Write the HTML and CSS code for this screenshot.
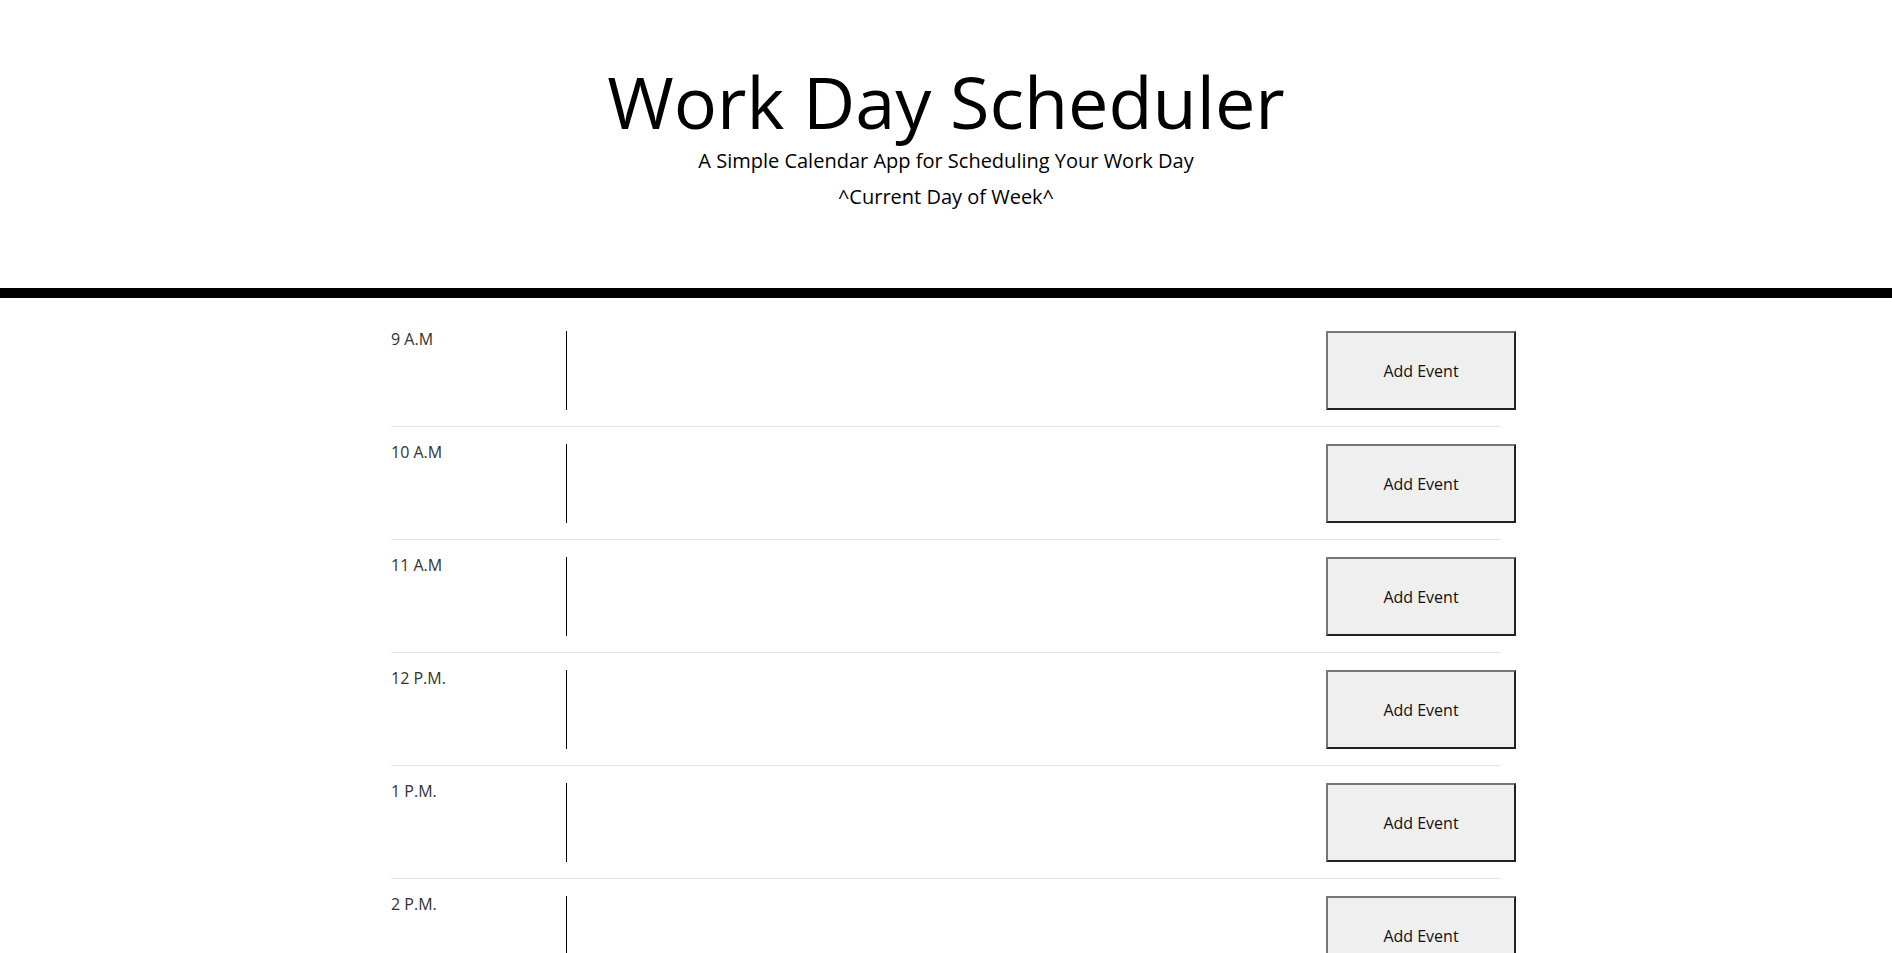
FILE: index.html
```html
<!DOCTYPE html>
<html lang="en">
<head>
<meta charset="utf-8">
<title>Work Day Scheduler</title>
<link rel="stylesheet" href="styles.css">
</head>
<body>
<header class="jumbotron">
  <h1 class="title">Work Day Scheduler</h1>
  <p class="lead">A Simple Calendar App for Scheduling Your Work Day</p>
  <p class="day">^Current Day of Week^</p>
</header>
<main class="container">
  <div class="time-row"><div class="hour">9 A.M</div><textarea class="description"></textarea><button class="save-btn">Add Event</button></div>
  <div class="time-row"><div class="hour">10 A.M</div><textarea class="description"></textarea><button class="save-btn">Add Event</button></div>
  <div class="time-row"><div class="hour">11 A.M</div><textarea class="description"></textarea><button class="save-btn">Add Event</button></div>
  <div class="time-row"><div class="hour">12 P.M.</div><textarea class="description"></textarea><button class="save-btn">Add Event</button></div>
  <div class="time-row"><div class="hour">1 P.M.</div><textarea class="description"></textarea><button class="save-btn">Add Event</button></div>
  <div class="time-row"><div class="hour">2 P.M.</div><textarea class="description"></textarea><button class="save-btn">Add Event</button></div>
  <div class="time-row"><div class="hour">3 P.M.</div><textarea class="description"></textarea><button class="save-btn">Add Event</button></div>
  <div class="time-row"><div class="hour">4 P.M.</div><textarea class="description"></textarea><button class="save-btn">Add Event</button></div>
  <div class="time-row"><div class="hour">5 P.M.</div><textarea class="description"></textarea><button class="save-btn">Add Event</button></div>
</main>
</body>
</html>
```
FILE: styles.css
```css
* { box-sizing: border-box; }
body {
  margin: 0;
  font-family: "Open Sans", "Liberation Sans", sans-serif;
  color: #000;
  background: #fff;
}
.jumbotron {
  height: 298px;
  padding-top: 58px;
  text-align: center;
  border-bottom: 10px solid #000;
}
.title {
  margin: 0 0 2px;
  font-size: 72px;
  line-height: 1.2;
  font-weight: 400;
}
.lead {
  margin: 0;
  font-size: 20px;
  line-height: 30px;
}
.day {
  margin: 6px 0 0;
  font-size: 20px;
  line-height: 30px;
}
.container {
  width: 1110px;
  margin: 0 auto;
  padding-top: 16px;
}
.time-row {
  display: flex;
  align-items: flex-start;
  padding: 17px 0 16px;
  border-bottom: 1px solid #e5e5e5;
}
.hour {
  width: 175px;
  flex: none;
  font-size: 16px;
  line-height: 16px;
  color: #333;
}
.description {
  flex: 1;
  height: 79px;
  margin: 0;
  padding: 0;
  border: none;
  border-left: 1px solid #000;
  resize: none;
  outline: none;
  background: transparent;
  font-family: inherit;
}
.save-btn {
  flex: none;
  width: 190px;
  height: 79px;
  margin: 0 -15px 0 0;
  padding: 0;
  background: #efefef;
  border: 2px solid;
  border-color: #767676 #222 #222 #767676;
  font-family: "Open Sans", "Liberation Sans", sans-serif;
  font-size: 16px;
  line-height: 24px;
  color: #111;
}
```
